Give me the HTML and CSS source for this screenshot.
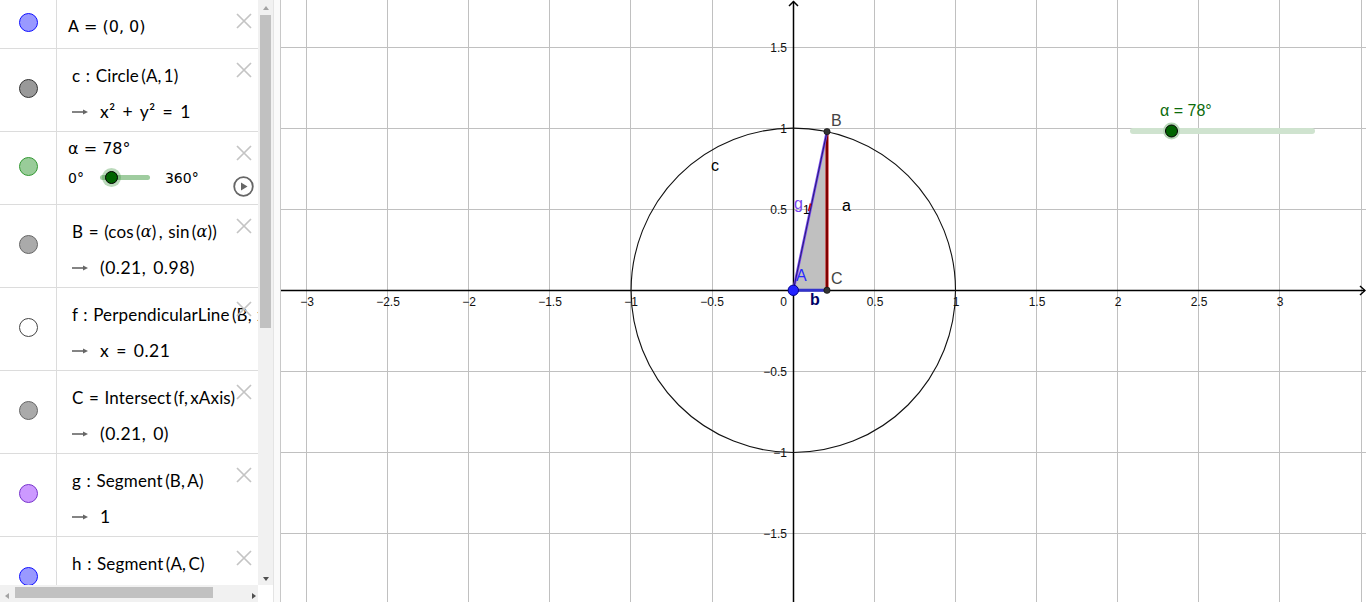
FILE: index.html
```html
<!DOCTYPE html>
<html>
<head>
<meta charset="utf-8">
<link rel="stylesheet" href="styles.css">
</head>
<body>
<div class="app">
  <aside class="panel">
    <div class="panel-top">
      <div class="list">
        <div class="row r1">
          <div class="marker-col"><span class="dot d-blue"></span></div>
          <div class="content">
            <div class="line plain val">A = (0, 0)</div>
          </div>
          <svg class="close" width="16" height="16" viewBox="0 0 16 16"><path d="M1 1L15 15M15 1L1 15"/></svg>
        </div>
        <div class="row">
          <div class="marker-col"><span class="dot d-dark"></span></div>
          <div class="content">
            <div class="line">c : Circle&#8201;(A,&#8201;1)</div>
            <div class="line"><svg class="arr" width="17" height="8" viewBox="0 0 17 8"><path d="M0 4H14"/><path class="head" d="M11 1.5L16 4L11 6.5Z"/></svg><span class="v">x² + y² = 1</span></div>
          </div>
          <svg class="close" width="16" height="16" viewBox="0 0 16 16"><path d="M1 1L15 15M15 1L1 15"/></svg>
        </div>
        <div class="row r3">
          <div class="marker-col"><span class="dot d-green"></span></div>
          <div class="content c3">
            <div class="line plain val big">α = 78°</div>
            <div class="line plain sl">
              <span class="deg">0°</span>
              <span class="track"><span class="knob"></span></span>
              <span class="deg">360°</span>
            </div>
          </div>
          <svg class="close" width="16" height="16" viewBox="0 0 16 16"><path d="M1 1L15 15M15 1L1 15"/></svg>
          <svg class="play" width="21" height="21" viewBox="0 0 21 21"><circle cx="10.5" cy="10.5" r="9.3"/><path d="M8 6.5L14.5 10.5L8 14.5Z"/></svg>
        </div>
        <div class="row">
          <div class="marker-col"><span class="dot d-grey"></span></div>
          <div class="content">
            <div class="line">B = (cos&#8201;(<i>α</i>)&#8201;, sin&#8201;(<i>α</i>))</div>
            <div class="line"><svg class="arr" width="17" height="8" viewBox="0 0 17 8"><path d="M0 4H14"/><path class="head" d="M11 1.5L16 4L11 6.5Z"/></svg><span class="v">(0.21, 0.98)</span></div>
          </div>
          <svg class="close" width="16" height="16" viewBox="0 0 16 16"><path d="M1 1L15 15M15 1L1 15"/></svg>
        </div>
        <div class="row">
          <div class="marker-col"><span class="dot d-white"></span></div>
          <div class="content">
            <div class="line">f : PerpendicularLine&#8201;(B, xAxis)</div>
            <div class="line"><svg class="arr" width="17" height="8" viewBox="0 0 17 8"><path d="M0 4H14"/><path class="head" d="M11 1.5L16 4L11 6.5Z"/></svg><span class="v">x = 0.21</span></div>
          </div>
          <svg class="close" width="16" height="16" viewBox="0 0 16 16"><path d="M1 1L15 15M15 1L1 15"/></svg>
        </div>
        <div class="row">
          <div class="marker-col"><span class="dot d-grey"></span></div>
          <div class="content">
            <div class="line">C = Intersect&#8201;(f,&#8201;xAxis)</div>
            <div class="line"><svg class="arr" width="17" height="8" viewBox="0 0 17 8"><path d="M0 4H14"/><path class="head" d="M11 1.5L16 4L11 6.5Z"/></svg><span class="v">(0.21, 0)</span></div>
          </div>
          <svg class="close" width="16" height="16" viewBox="0 0 16 16"><path d="M1 1L15 15M15 1L1 15"/></svg>
        </div>
        <div class="row">
          <div class="marker-col"><span class="dot d-violet"></span></div>
          <div class="content">
            <div class="line">g : Segment&#8201;(B,&#8201;A)</div>
            <div class="line"><svg class="arr" width="17" height="8" viewBox="0 0 17 8"><path d="M0 4H14"/><path class="head" d="M11 1.5L16 4L11 6.5Z"/></svg><span class="v">1</span></div>
          </div>
          <svg class="close" width="16" height="16" viewBox="0 0 16 16"><path d="M1 1L15 15M15 1L1 15"/></svg>
        </div>
        <div class="row">
          <div class="marker-col"><span class="dot d-blue"></span></div>
          <div class="content">
            <div class="line">h : Segment&#8201;(A,&#8201;C)</div>
          </div>
          <svg class="close" width="16" height="16" viewBox="0 0 16 16"><path d="M1 1L15 15M15 1L1 15"/></svg>
        </div>
      </div>
      <div class="vscroll">
        <div class="sb-btn"><span class="tri-up"></span></div>
        <div class="vthumb"></div>
        <div class="sb-fill"></div>
        <div class="sb-btn"><span class="tri-down"></span></div>
      </div>
    </div>
    <div class="panel-bottom">
      <div class="hscroll">
        <div class="sb-hbtn"><span class="tri-left"></span></div>
        <div class="hthumb"></div>
        <div class="sb-fill"></div>
        <div class="sb-hbtn"><span class="tri-right"></span></div>
      </div>
      <div class="corner"></div>
    </div>
  </aside>
  <div class="splitter"></div>
  <main class="canvas">
    <svg class="plot" width="1085" height="602" viewBox="281 0 1085 602">
      <g class="grid">
        <path d="M306.5 0V602M387.5 0V602M468.5 0V602M549.5 0V602M630.5 0V602M712.5 0V602M874.5 0V602M955.5 0V602M1036.5 0V602M1117.5 0V602M1198.5 0V602M1279.5 0V602M1361.5 0V602"/>
        <path d="M281 47.5H1366M281 128.5H1366M281 209.5H1366M281 371.5H1366M281 452.5H1366M281 533.5H1366"/>
      </g>
      <g class="axes">
        <path d="M281 290.5H1365M793.5 602V1.5"/>
        <path d="M1360 286L1365 290.5L1360 295M789 6L793.5 1.5L798 6"/>
      </g>
      <g class="ticks">
        <text x="307" y="306">−3</text>
        <text x="388" y="306">−2.5</text>
        <text x="469" y="306">−2</text>
        <text x="550" y="306">−1.5</text>
        <text x="631" y="306">−1</text>
        <text x="712" y="306">−0.5</text>
        <text x="875" y="306">0.5</text>
        <text x="956" y="306">1</text>
        <text x="1037" y="306">1.5</text>
        <text x="1118" y="306">2</text>
        <text x="1199" y="306">2.5</text>
        <text x="1280" y="306">3</text>
      </g>
      <g class="yticks">
        <text x="787" y="306">0</text>
        <text x="787" y="52">1.5</text>
        <text x="787" y="133">1</text>
        <text x="787" y="214">0.5</text>
        <text x="787" y="376">−0.5</text>
        <text x="787" y="457">−1</text>
        <text x="787" y="538">−1.5</text>
      </g>
      <circle class="unit" cx="793.3" cy="290.3" r="162.2"/>
      <polygon class="tri" points="793.3,290.3 827,131.6 827,290.3"/>
      <path class="seg-a" d="M827 131.6V290.3"/>
      <path class="seg-a-core" d="M827 131.6V290.3"/>
      <path class="seg-h" d="M793.3 290.3H827"/>
      <path class="seg-g" d="M793.3 290.3L827 131.6"/>
      <path class="seg-g-core" d="M793.3 290.3L827 131.6"/>
      <path class="tick-red" d="M810.5 203.5L808.5 211"/>
      <circle class="pt-small" cx="827" cy="131.6" r="3.2"/>
      <circle class="pt-small" cx="827" cy="290.3" r="3.2"/>
      <circle class="pt-a" cx="793.3" cy="290.3" r="5.2"/>
      <text class="lbl grey" x="831" y="126">B</text>
      <text class="lbl grey" x="831" y="284">C</text>
      <text class="lbl blue" x="796" y="281">A</text>
      <text class="lbl" x="842" y="211">a</text>
      <text class="lbl navy" x="810" y="305">b</text>
      <text class="lbl" x="711" y="171">c</text>
      <text class="lbl purple" x="794" y="209">g</text>
      <text class="lbl small" x="803" y="214">1</text>
      <text class="sl-lbl" x="1160" y="116">α = 78°</text>
      <path class="sl-track" d="M1133 131H1312"/>
      <circle class="sl-halo" cx="1171.5" cy="131" r="8.5"/>
      <circle class="sl-knob" cx="1171.5" cy="131" r="6"/>
    </svg>
  </main>
</div>
</body>
</html>
```

FILE: styles.css
```css
* { box-sizing: border-box; }
html, body { margin: 0; padding: 0; }
body {
  width: 1366px;
  height: 602px;
  overflow: hidden;
  background: #fff;
  font-family: "Lato", "DejaVu Sans", sans-serif;
  color: #000;
}
.app { display: flex; height: 602px; }
.panel { width: 273px; display: flex; flex-direction: column; flex: none; }
.panel-top { display: flex; height: 585px; }
.list { width: 258px; overflow: hidden; flex: none; }
.row {
  position: relative;
  display: flex;
  height: 83px;
  border-bottom: 1px solid #dcdcdc;
}
.row.r1 { height: 49px; }
.row.r3 { height: 73px; }
.marker-col {
  width: 57px;
  flex: none;
  border-right: 1px solid #dcdcdc;
  display: flex;
  align-items: center;
  justify-content: center;
}
.dot {
  width: 19px;
  height: 19px;
  border-radius: 50%;
  border: 1px solid #333;
  margin-bottom: 4px;
}
.d-blue { background: #9999ff; border-color: #1010ff; }
.d-dark { background: #999; border-color: #333; }
.d-green { background: #99cc99; border-color: #339933; }
.d-grey { background: #aaa; border-color: #666; }
.d-white { background: #fff; border-color: #444; }
.d-violet { background: #cc99ff; border-color: #7733cc; }
.content {
  flex: 1;
  min-width: 0;
  padding: 14px 0 0 15px;
  white-space: nowrap;
}
.content.c3 { padding-top: 4px; }
.line {
  height: 25px;
  display: flex;
  align-items: center;
  font-size: 17px;
  letter-spacing: 0.15px;
  word-spacing: 1px;
}
.line + .line { margin-top: 11px; }
.c3 .line + .line { margin-top: 4px; }
.line i { font-family: "DejaVu Serif", serif; font-style: italic; font-size: 16px; }
.line .v { font-size: 17.5px; letter-spacing: 0.5px; word-spacing: 2px; }
.plain { margin-left: -4px; }
.val { font-family: "DejaVu Sans", sans-serif; font-size: 16px; letter-spacing: 0; word-spacing: 0; }
.big { font-size: 16px; }
.arr { flex: none; margin-right: 11px; }
.arr path { stroke: #666; stroke-width: 1.6; fill: none; }
.arr path.head { fill: #666; stroke: none; }
.sl { font-family: "DejaVu Sans", sans-serif; font-size: 14px; letter-spacing: 0; word-spacing: 0; }
.deg { color: #000; }
.track {
  position: relative;
  width: 50px;
  height: 5px;
  margin: 0 15px 0 16px;
  background: #9fcc9f;
  border-radius: 3px;
}
.knob {
  position: absolute;
  left: 5px;
  top: -4px;
  width: 13px;
  height: 13px;
  border-radius: 50%;
  background: #006400;
  border: 1px solid #000;
  box-shadow: 0 0 0 3px rgba(60, 150, 60, 0.35);
}
.close {
  position: absolute;
  top: 13px;
  right: 6px;
}
.close path { stroke: #c4c4c4; stroke-width: 1.7; fill: none; }
.play { position: absolute; right: 4px; top: 44px; }
.play circle { fill: none; stroke: #666; stroke-width: 1.8; }
.play path { fill: #666; }
.vscroll {
  width: 15px;
  flex: none;
  background: #f1f1f1;
  display: flex;
  flex-direction: column;
  align-items: center;
}
.sb-btn { height: 15px; width: 15px; display: flex; align-items: center; justify-content: center; flex: none; }
.vthumb { width: 11px; height: 313px; background: #c1c1c1; flex: none; }
.sb-fill { flex: 1; }
.tri-up { width: 0; height: 0; border-left: 3.5px solid transparent; border-right: 3.5px solid transparent; border-bottom: 4px solid #a3a3a3; margin-top: 1px; }
.tri-down { width: 0; height: 0; border-left: 3.5px solid transparent; border-right: 3.5px solid transparent; border-top: 4px solid #505050; margin-top: 2px; }
.panel-bottom { display: flex; height: 17px; }
.hscroll {
  width: 258px;
  height: 17px;
  background: #f1f1f1;
  display: flex;
  align-items: flex-start;
}
.sb-hbtn { width: 15px; height: 15px; display: flex; align-items: center; justify-content: center; flex: none; }
.hthumb { width: 198px; height: 11px; margin-top: 2px; background: #c1c1c1; flex: none; }
.tri-left { width: 0; height: 0; border-top: 3.5px solid transparent; border-bottom: 3.5px solid transparent; border-right: 4px solid #a3a3a3; margin-top: 6px; margin-right: 2px; }
.tri-right { width: 0; height: 0; border-top: 3.5px solid transparent; border-bottom: 3.5px solid transparent; border-left: 4px solid #505050; margin-top: 6px; margin-left: 6px; }
.corner { flex: 1; background: #fff; }
.splitter {
  width: 8px;
  flex: none;
  background: #fafafa;
  border-left: 1px solid #e4e4e4;
  border-right: 1px solid #c8c8c8;
}
.canvas { flex: 1; overflow: hidden; }
.plot { display: block; }
.grid path { stroke: #c0c0c0; stroke-width: 1; fill: none; }
.axes path { stroke: #000; stroke-width: 1.5; fill: none; }
.ticks text, .yticks text {
  font-family: "Liberation Sans", Arial, sans-serif;
  font-size: 12px;
  fill: #111;
}
.ticks text { text-anchor: middle; }
.yticks text { text-anchor: end; }
.unit { fill: none; stroke: #111; stroke-width: 1.1; }
.tri { fill: #c0c0c0; stroke: none; }
.seg-a { stroke: #c00000; stroke-width: 3; fill: none; }
.seg-a-core { stroke: #400000; stroke-width: 1; fill: none; }
.seg-h { stroke: #3333cc; stroke-width: 3; fill: none; }
.seg-g { stroke: #7744ee; stroke-width: 2.6; fill: none; }
.seg-g-core { stroke: #1a1a66; stroke-width: 0.9; fill: none; }
.tick-red { stroke: #cc0000; stroke-width: 1.5; fill: none; }
.pt-small { fill: #333; stroke: #000; stroke-width: 0.5; }
.pt-a { fill: #2222ff; stroke: #000088; stroke-width: 1; }
.lbl {
  font-family: "Liberation Sans", Arial, sans-serif;
  font-size: 16px;
  fill: #000;
}
.lbl.grey { fill: #444; }
.lbl.blue { fill: #2a2aff; }
.lbl.navy { fill: #000066; font-weight: bold; }
.lbl.purple { fill: #7744ee; }
.lbl.small { font-size: 12px; }
.sl-lbl {
  font-family: "Liberation Sans", Arial, sans-serif;
  font-size: 16px;
  fill: #0b6b0b;
}
.sl-track { stroke: #cfe3cf; stroke-width: 6; stroke-linecap: round; fill: none; }
.sl-halo { fill: #b7d7b7; }
.sl-knob { fill: #006400; stroke: #000; stroke-width: 1; }
```
